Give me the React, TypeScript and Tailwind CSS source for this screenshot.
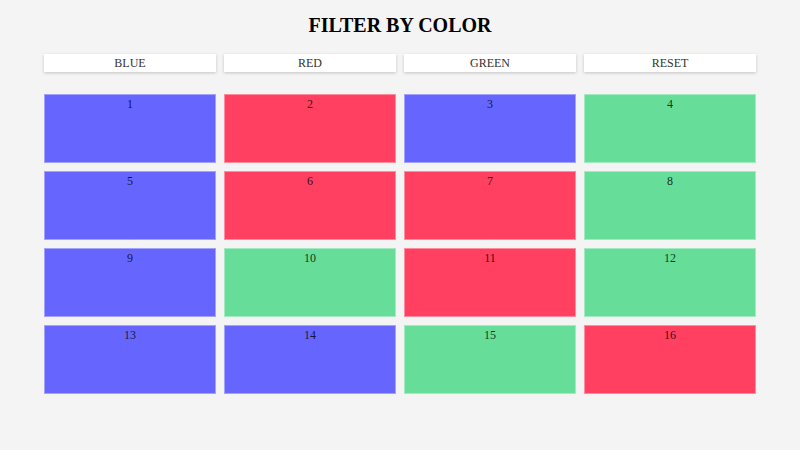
import { useState } from "react";

type Tone = "blue" | "red" | "green";

const tiles: { id: number; color: Tone }[] = [
  { id: 1, color: "blue" },
  { id: 2, color: "red" },
  { id: 3, color: "blue" },
  { id: 4, color: "green" },
  { id: 5, color: "blue" },
  { id: 6, color: "red" },
  { id: 7, color: "red" },
  { id: 8, color: "green" },
  { id: 9, color: "blue" },
  { id: 10, color: "green" },
  { id: 11, color: "red" },
  { id: 12, color: "green" },
  { id: 13, color: "blue" },
  { id: 14, color: "blue" },
  { id: 15, color: "green" },
  { id: 16, color: "red" },
];

const toneClass: Record<Tone, string> = {
  blue: "bg-[#6666ff]",
  red: "bg-[#ff4060]",
  green: "bg-[#66dd99]",
};

const filters = [
  { label: "BLUE", value: "blue" },
  { label: "RED", value: "red" },
  { label: "GREEN", value: "green" },
  { label: "RESET", value: "all" },
];

export default function App() {
  const [filter, setFilter] = useState("all");

  const visible =
    filter === "all" ? tiles : tiles.filter((t) => t.color === filter);

  return (
    <div className="min-h-[450px] bg-[#f4f4f4] px-[44px] pt-[14px] font-['Liberation_Serif',serif]">
      <h1 className="text-center text-[20px] font-bold leading-[22px] text-black">
        FILTER BY COLOR
      </h1>

      <div className="mt-[18px] grid grid-cols-4 gap-[8px]">
        {filters.map((f) => (
          <button
            key={f.value}
            onClick={() => setFilter(f.value)}
            className="h-[18px] bg-white text-[12px] leading-[17px] text-[#333] shadow-[0_1px_3px_rgba(0,0,0,0.2)]"
          >
            {f.label}
          </button>
        ))}
      </div>

      <div className="mt-[22px] grid grid-cols-4 gap-[8px]">
        {visible.map((t) => (
          <div
            key={t.id}
            className={`h-[69px] border border-white/40 pt-[1px] text-center text-[12px] leading-[16px] text-black/80 ${toneClass[t.color]}`}
          >
            {t.id}
          </div>
        ))}
      </div>
    </div>
  );
}
